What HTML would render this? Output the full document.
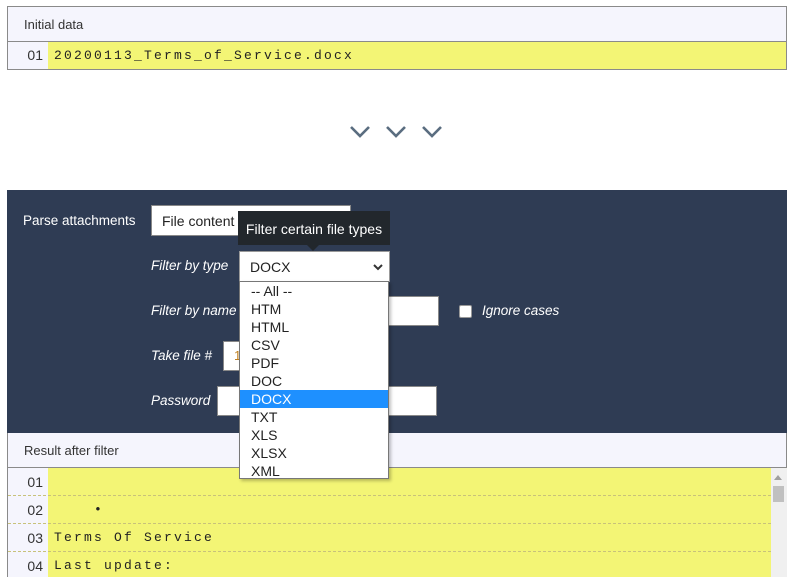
<!DOCTYPE html>
<html style="overflow:hidden"><head><meta charset="utf-8"><style>
*{box-sizing:border-box;margin:0;padding:0}
html,body{width:792px;height:577px;overflow:hidden}
body{background:#fff;position:relative;font-family:"Liberation Sans",sans-serif;font-size:13px;color:#333}
.abs{position:absolute}
.box{position:absolute;left:7px;width:780px;border:1px solid #8a8a8a;background:#f5f5fd}
.hdr{height:35px;line-height:35px;padding-left:16px;font-size:13px;color:#333;border-bottom:1px solid #8a8a8a}
.mono{font-family:"Liberation Mono",monospace;font-size:13px;letter-spacing:2.2px;color:#222}
.ln{position:absolute;left:0;width:40px;text-align:right;padding-right:5px;font-size:14px;color:#333}
.lbl{position:absolute;color:#fff;font-size:13.5px}
.it{font-style:italic}
.inp{position:absolute;background:#fff;border:1px solid #888}
.dd div{height:18px;line-height:18px;padding-left:11px;font-size:14px;color:#222}
</style></head><body>
<div class="box" style="top:6px;height:64px">
  <div class="hdr">Initial data</div>
  <div class="abs" style="left:40px;top:35px;right:0;height:27px;background:#f3f575"></div>
  <div class="ln" style="top:35px;line-height:27px">01</div>
  <div class="abs mono" style="left:46px;top:35px;line-height:27px">20200113_Terms_of_Service.docx</div>
</div>
<svg class="abs" style="left:345px;top:121px" width="105" height="24" viewBox="0 0 105 24">
<g fill="none" stroke="#5a6d80" stroke-width="2.6">
<path d="M6 6l9 9 9-9"/><path d="M42 6l9 9 9-9"/><path d="M78 6l9 9 9-9"/></g></svg>

<div class="abs" style="left:7px;top:190px;width:780px;height:243px;background:#2f3c54"></div>
<div class="lbl" style="left:23px;top:213px">Parse attachments</div>
<div class="inp" style="left:151px;top:205px;width:200px;height:31px;padding:7px 10px;color:#222;font-size:14px">File content</div>

<div class="lbl it" style="left:151px;top:258px">Filter by type</div>
<div class="lbl it" style="left:151px;top:303px">Filter by name</div>
<div class="inp" style="left:386px;top:296px;width:53px;height:30px"></div>
<div class="abs" style="left:459px;top:305px;width:13px;height:13px;background:#fff;border:1px solid #999;border-radius:2px"></div>
<div class="lbl it" style="left:482px;top:303px">Ignore cases</div>
<div class="lbl it" style="left:151px;top:348px">Take file #</div>
<div class="inp" style="left:223px;top:341px;width:40px;height:30px;padding:6px 10px;color:#c08020">1</div>
<div class="lbl it" style="left:151px;top:393px">Password</div>
<div class="inp" style="left:217px;top:386px;width:220px;height:30px"></div>

<div class="abs" style="left:238px;top:211px;width:152px;height:34px;background:#22272c;color:#fff;font-size:14px;line-height:36px;text-align:center">Filter certain file types</div>
<div class="abs" style="left:307px;top:245px;width:0;height:0;border-left:6px solid transparent;border-right:6px solid transparent;border-top:6px solid #22272c"></div>

<div class="inp" style="left:239px;top:251px;width:151px;height:31px;border-color:#999;padding:7px 10px;color:#222;font-size:14px">DOCX
<svg class="abs" style="right:6px;top:11px" width="10" height="8"><path d="M1 2l4 4 4-4" fill="none" stroke="#333" stroke-width="2"/></svg></div>
<div class="abs dd" style="left:239px;top:281px;width:150px;height:198px;background:#fff;border:1px solid #777;box-shadow:2px 2px 3px rgba(0,0,0,.25)">
<div>-- All --</div><div>HTM</div><div>HTML</div><div>CSV</div><div>PDF</div><div>DOC</div>
<div style="background:#1e90ff;color:#fff">DOCX</div><div>TXT</div><div>XLS</div><div>XLSX</div><div>XML</div></div>

<div class="box" style="top:432px;height:150px;z-index:-1">
  <div class="hdr">Result after filter</div>
  <div class="abs" style="left:40px;top:35px;width:723px;height:120px;background:#f3f575"></div>
  <div class="abs" style="left:763px;top:35px;width:16px;height:120px;background:#f0f0f0"></div>
  <div class="abs" style="left:765px;top:53px;width:11px;height:16px;background:#c0c0c0"></div>
  <div class="abs" style="left:766px;top:42px;width:0;height:0;border-left:4px solid transparent;border-right:4px solid transparent;border-bottom:5px solid #a0a0a0"></div>
  <div class="ln" style="top:35px;line-height:28px">01</div>
  <div class="ln" style="top:63px;line-height:28px">02</div>
  <div class="ln" style="top:91px;line-height:28px">03</div>
  <div class="ln" style="top:119px;line-height:28px">04</div>
  <div class="abs" style="left:0;top:62px;width:763px;border-top:1px dashed #c8c27a"></div>
  <div class="abs" style="left:0;top:90px;width:763px;border-top:1px dashed #c8c27a"></div>
  <div class="abs" style="left:0;top:118px;width:763px;border-top:1px dashed #c8c27a"></div>
  <div class="abs mono" style="left:86px;top:63px;line-height:28px">•</div>
  <div class="abs mono" style="left:46px;top:91px;line-height:28px">Terms Of Service</div>
  <div class="abs mono" style="left:46px;top:119px;line-height:28px">Last update:</div>
</div>
</body></html>
